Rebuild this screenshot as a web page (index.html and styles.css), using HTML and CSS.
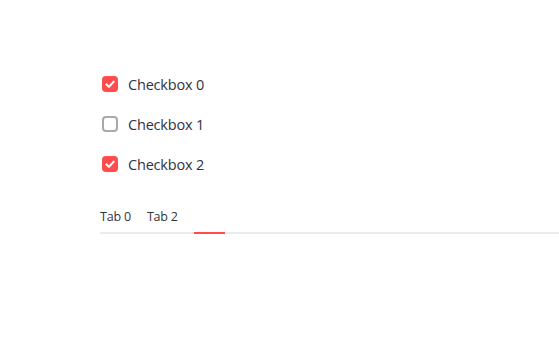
FILE: index.html
```html
<!DOCTYPE html>
<html>
<head>
<meta charset="utf-8">
<link rel="stylesheet" href="styles.css">
</head>
<body>
<div class="main">
  <div class="checks">
    <label class="check">
      <span class="box on"><svg viewBox="0 0 16 16" width="16" height="16"><path d="M4.2 8.3 L6.9 10.9 L11.8 5.6" fill="none" stroke="#fff" stroke-width="2" stroke-linecap="round" stroke-linejoin="round"/></svg></span>
      <span class="label">Checkbox 0</span>
    </label>
    <label class="check">
      <span class="box"></span>
      <span class="label">Checkbox 1</span>
    </label>
    <label class="check">
      <span class="box on"><svg viewBox="0 0 16 16" width="16" height="16"><path d="M4.2 8.3 L6.9 10.9 L11.8 5.6" fill="none" stroke="#fff" stroke-width="2" stroke-linecap="round" stroke-linejoin="round"/></svg></span>
      <span class="label">Checkbox 2</span>
    </label>
  </div>
  <div class="tabs">
    <div class="tablist">
      <span class="tab">Tab 0</span>
      <span class="tab">Tab 2</span>
    </div>
    <div class="track"><span class="indicator"></span></div>
  </div>
</div>
</body>
</html>
```
FILE: styles.css
```css
html, body {
  margin: 0;
  padding: 0;
  background: #fff;
}
body {
  font-family: "Open Sans", "Noto Sans", sans-serif;
  color: rgb(49, 51, 63);
}
.main {
  padding: 72px 0 0 100px;
}
.checks {
  display: flex;
  flex-direction: column;
  gap: 16px;
  padding-left: 2px;
}
.check {
  display: flex;
  align-items: center;
  height: 24px;
  gap: 10px;
}
.box {
  width: 16px;
  height: 16px;
  box-sizing: border-box;
  border: 2px solid #a9a9a9;
  border-radius: 4px;
  background: #fff;
  display: flex;
}
.box.on {
  border: none;
  background: #ff4b4b;
}
.label {
  font-size: 14.5px;
  letter-spacing: -0.2px;
}
.tabs {
  margin-top: 25px;
}
.tablist {
  display: flex;
  gap: 16px;
  height: 30px;
  align-items: center;
  font-size: 12.5px;
  letter-spacing: -0.2px;
}
.track {
  height: 2px;
  background: #ebebeb;
  position: relative;
  margin-top: 1px;
}
.indicator {
  position: absolute;
  left: 94px;
  top: 0;
  width: 31px;
  height: 2px;
  background: #ff4b4b;
}
```
